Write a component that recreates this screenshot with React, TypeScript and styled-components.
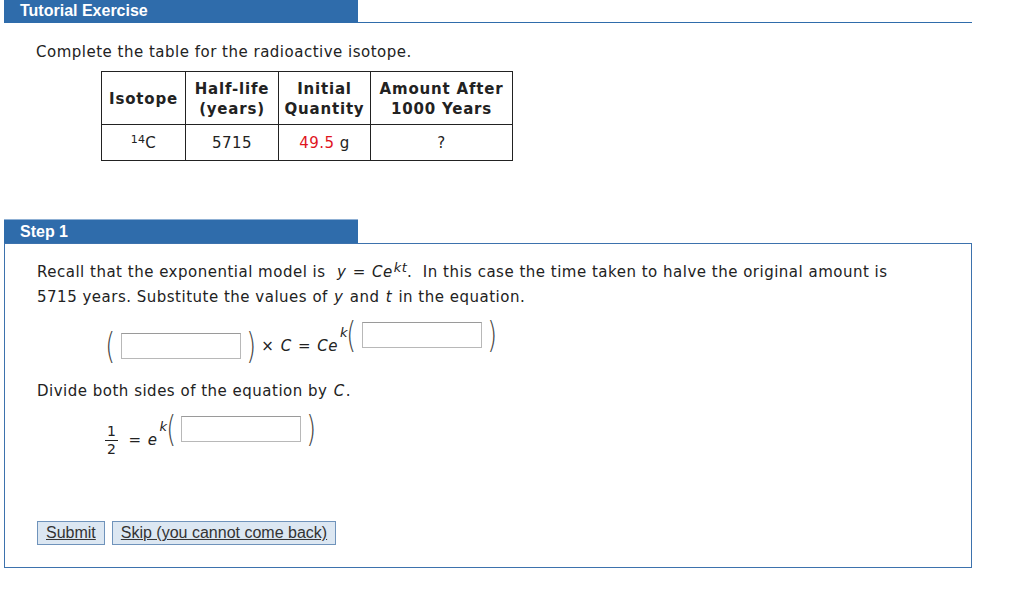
import React from "react";
import styled, { createGlobalStyle } from "styled-components";

const GlobalStyle = createGlobalStyle`
  html, body {
    margin: 0;
    padding: 0;
    background: #ffffff;
  }
  body {
    font-family: "DejaVu Sans", Verdana, sans-serif;
    color: #222;
  }
`;

const BLUE = "#2f6cab";

const Page = styled.div`
  width: 1024px;
  height: 609px;
  padding: 0 52px 0 4px;
  box-sizing: border-box;
  overflow: hidden;
`;

const TitleRow = styled.div`
  display: flex;
  align-items: flex-end;
  border-bottom: 1px solid ${BLUE};
  width: 968px;
`;

const TitleTab = styled.div<{ $h: number }>`
  width: 354px;
  height: ${(p) => p.$h}px;
  background: ${BLUE};
  color: #fff;
  font-family: "Liberation Sans", Arial, sans-serif;
  font-weight: bold;
  font-size: 16px;
  box-sizing: border-box;
  padding-left: 16px;
  display: flex;
  align-items: center;
`;

const Intro = styled.p`
  margin: 19px 0 0 32px;
  font-size: 15px;
  letter-spacing: 0.5px;
  line-height: 20px;
`;

const Table = styled.table`
  margin: 9px 0 0 97px;
  border-collapse: collapse;
  table-layout: fixed;
  width: 411px;
  font-size: 15px;
`;

const Th = styled.th`
  border: 1.5px solid #222;
  height: 50px;
  padding: 2px 0 0;
  font-weight: bold;
  letter-spacing: 0.8px;
  line-height: 20px;
  text-align: center;
  white-space: nowrap;
`;

const Td = styled.td`
  border: 1.5px solid #222;
  height: 35px;
  padding: 0;
  text-align: center;
  letter-spacing: 0.5px;
`;

const Red = styled.span`
  color: #e0141e;
`;

const Sup = styled.sup<{ $size?: number }>`
  font-size: ${(p) => p.$size ?? 11}px;
  vertical-align: 5px;
  line-height: 0;
  letter-spacing: 0.3px;
`;

const StepSection = styled.div`
  margin-top: 58px;
`;

const StepTab = styled(TitleTab)`
  border-top: 1px solid #8fb0d4;
`;

const StepBox = styled.div`
  width: 968px;
  height: 325px;
  box-sizing: border-box;
  border: 1px solid #3d72ad;
  padding: 16px 0 0 32px;
`;

const Para = styled.p<{ $top?: number }>`
  margin: ${(p) => p.$top ?? 0}px 0 0 0;
  font-size: 15px;
  letter-spacing: 0.5px;
  line-height: 25px;
  width: 880px;
`;

const Var = styled.i`
  font-style: italic;
  margin: 0 1px;
`;

const EqRow = styled.div<{ $indent: number; $top: number }>`
  display: flex;
  align-items: center;
  margin: ${(p) => p.$top}px 0 0 ${(p) => p.$indent}px;
  font-size: 15px;
  letter-spacing: 0.5px;
  height: 44px;
`;

const Paren = styled.span`
  font-size: 36px;
  font-weight: 200;
  color: #444;
  transform: scaleX(0.7);
  line-height: 1;
  margin: 0 -2px;
`;

const Blank = styled.input`
  width: 120px;
  height: 26px;
  box-sizing: border-box;
  border: 1px solid #b8b8b8;
  border-top-color: #9a9a9a;
  background: #fff;
  margin: 0 5px;
`;

const Raised = styled.div`
  display: flex;
  align-items: center;
  position: relative;
  top: -11px;
`;

const ExpK = styled.i`
  font-size: 13px;
  position: relative;
  top: -3px;
  margin: 0 -2px 0 1px;
`;

const Frac = styled.span`
  display: inline-flex;
  flex-direction: column;
  align-items: center;
  font-size: 14px;
  line-height: 17px;
  margin-right: 10px;
`;

const FracTop = styled.span`
  border-bottom: 1px solid #222;
  padding: 0 2px;
`;

const Buttons = styled.div`
  display: flex;
  gap: 7px;
  margin-top: 59px;
`;

const Btn = styled.button`
  font-family: "Liberation Sans", Arial, sans-serif;
  font-size: 16px;
  color: #333;
  text-decoration: underline;
  background: #dce7f2;
  border: 1px solid #6f93bb;
  height: 24px;
  padding: 0 8px;
  cursor: pointer;
`;

export default function App() {
  return (
    <>
      <GlobalStyle />
      <Page>
        <TitleRow>
          <TitleTab $h={22}>Tutorial Exercise</TitleTab>
        </TitleRow>
        <Intro>Complete the table for the radioactive isotope.</Intro>
        <Table>
          <colgroup>
            <col style={{ width: 84 }} />
            <col style={{ width: 93 }} />
            <col style={{ width: 92 }} />
            <col style={{ width: 142 }} />
          </colgroup>
          <thead>
            <tr>
              <Th>Isotope</Th>
              <Th>
                Half-life
                <br />
                (years)
              </Th>
              <Th>
                Initial
                <br />
                Quantity
              </Th>
              <Th>
                Amount After
                <br />
                1000 Years
              </Th>
            </tr>
          </thead>
          <tbody>
            <tr>
              <Td>
                <Sup>14</Sup>C
              </Td>
              <Td>5715</Td>
              <Td>
                <Red>49.5</Red> g
              </Td>
              <Td>?</Td>
            </tr>
          </tbody>
        </Table>
        <StepSection>
          <StepTab $h={24}>Step 1</StepTab>
          <StepBox>
            <Para>
              Recall that the exponential model is&nbsp; <Var>y</Var> = <Var>Ce</Var>
              <Sup $size={13}>
                <i>kt</i>
              </Sup>
              .&nbsp; In this case the time taken to halve the original amount is 5715 years. Substitute the
              values of <Var>y</Var> and <Var>t</Var> in the equation.
            </Para>
            <EqRow $indent={68} $top={14}>
              <Paren>(</Paren>
              <Blank />
              <Paren>)</Paren>
              <span>
                &nbsp;× <Var>C</Var> = <Var>Ce</Var>
              </span>
              <Raised>
                <ExpK>k</ExpK>
                <Paren>(</Paren>
                <Blank />
                <Paren>)</Paren>
              </Raised>
            </EqRow>
            <Para $top={11}>
              Divide both sides of the equation by <Var>C</Var>.
            </Para>
            <EqRow $indent={68} $top={14}>
              <Frac>
                <FracTop>1</FracTop>
                <span>2</span>
              </Frac>
              <span>
                = <Var>e</Var>
              </span>
              <Raised>
                <ExpK>k</ExpK>
                <Paren>(</Paren>
                <Blank />
                <Paren>)</Paren>
              </Raised>
            </EqRow>
            <Buttons>
              <Btn>Submit</Btn>
              <Btn>Skip (you cannot come back)</Btn>
            </Buttons>
          </StepBox>
        </StepSection>
      </Page>
    </>
  );
}
